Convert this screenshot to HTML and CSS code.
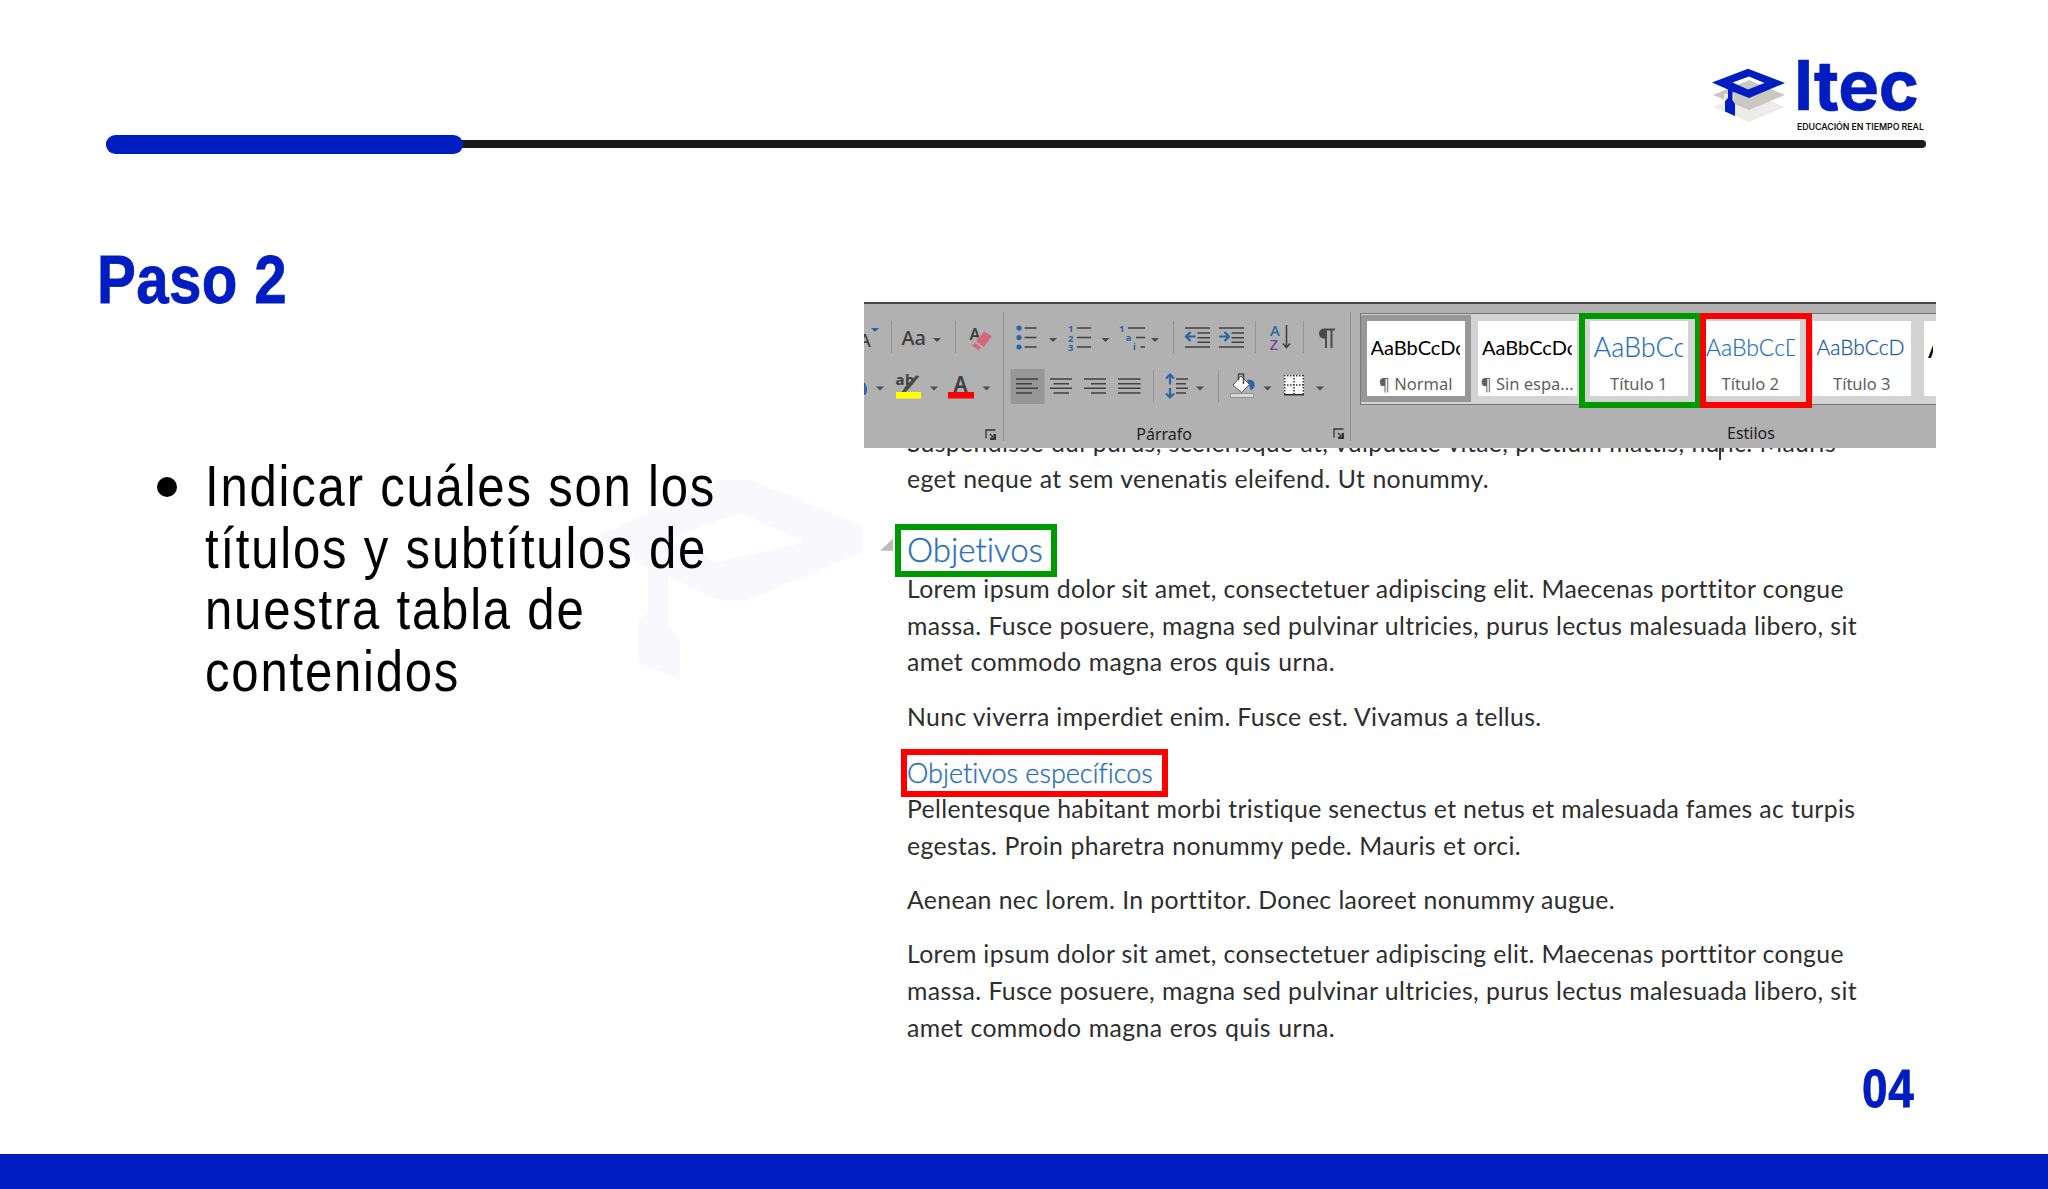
FILE: index.html
```html
<!DOCTYPE html>
<html lang="es">
<head>
<meta charset="utf-8">
<title>Paso 2</title>
<link rel="stylesheet" href="styles.css">
</head>
<body>
<div class="slide">
  <header class="header">
    <div class="logo">
      <svg class="logo-mark" viewBox="0 0 74 56" width="74" height="56">
        <path fill="#ececea" d="M1 39 37 24 73 39 37 54Z"/>
        <path fill="#cbc8c3" d="M1 27 37 12 73 27 37 42Z"/>
        <path fill="#fff" d="M12 26h10v20h-10z" opacity=".6"/>
        <path fill="#001dc1" fill-rule="evenodd" d="M0 14.500 36 .7 73 15 37 30 20.500 23.500V32L23 36V48L13 43.500V33L16 30V21.500ZM20.500 14.500 36 21.500 52.500 15 37 8.500Z"/>
      </svg>
      <div class="logo-words">
        <div class="logo-name">Itec</div>
        <div class="logo-tag">EDUCACIÓN EN TIEMPO REAL</div>
      </div>
    </div>
    <div class="rule"><div class="rule-accent"></div></div>
  </header>

  <main class="main">
    <section class="lesson">
      <h1 class="title">Paso 2</h1>
      <ul class="steps">
        <li class="step"><span class="dot"></span><p class="step-text">Indicar cuáles son los<br>títulos y subtítulos de<br>nuestra tabla de<br>contenidos</p></li>
      </ul>
      <svg class="watermark" viewBox="595 475 268 240" width="268" height="240">
        <path fill="#f9f9fd" fill-rule="evenodd" d="M597 536 722 480H752L863 526V552L748 600H718L668 577V624L680 640V680L638 662V622L648 612V568ZM668 540 718 562 805 542 740 513Z"/>
      </svg>
    </section>

    <section class="word">
      <div class="ribbon">
        <div class="group group-font">
          <svg class="tools" viewBox="864 304 139 108" width="139" height="108">
            <g fill="#3f3f3f" font-family="Noto Sans, sans-serif">
              <text x="859" y="347" font-size="18" font-weight="500">A</text>
              <text x="901.500" y="345" font-size="20" font-weight="500">Aa</text>
              <text x="969.500" y="340" font-size="16" font-weight="600">A</text>
              <text x="895.500" y="384.500" font-size="15" font-weight="700" textLength="19">ab</text>
              <text x="953.500" y="392" font-size="21" font-weight="600">A</text>
            </g>
            <path fill="#2b65a8" d="M871 328h8l-4 4zM864 382q3 3 3 8t-3 5z"/>
            <path stroke="#939393" d="M891.500 321v32M955.500 321v32"/>
            <path fill="#4c4c4c" d="M933 338h8l-4 4zM876 386.500h8l-4 4zM930 386.500h8l-4 4zM982.500 386.500h8l-4 4z"/>
            <path fill="#d9667f" stroke="#b1b1b1" stroke-width=".8" d="M984 331 992.500 336 984 347.500 975.500 341.500ZM975 342.500 981.500 347 979 351 971 345Z"/>
            <path fill="#4a4a4a" d="M919.500 376 907 391 904 388 916 375.500ZM904.500 388.500 907 391.500 901 392.500Z"/>
            <path fill="#ff0" d="M896 392h25v6.500h-25z"/>
            <path fill="#f00" d="M948 392h26v6.500h-26z"/>
          </svg>
          <div class="group-foot">
            <svg class="launcher" viewBox="0 0 12 12" width="12" height="12"><path fill="none" stroke="#333" stroke-width="1.300" d="M1 9.500V1H10.500M5 5 8 8"/><path fill="#333" d="M11 5V11H5V8.500H8.500V5Z"/></svg>
          </div>
        </div>

        <div class="group group-paragraph">
          <svg class="tools" viewBox="1004 304 347 108" width="347" height="108">
            <path fill="#979797" d="M1010.500 369h34v35h-34z"/>
            <g fill="#2b65a8"><circle cx="1019" cy="328" r="2.600"/><circle cx="1019" cy="337.500" r="2.600"/><circle cx="1019" cy="347" r="2.600"/></g>
            <g fill="#2b65a8" font-family="Noto Sans, sans-serif" font-weight="700" font-size="9.500">
              <text x="1068" y="332">1</text><text x="1068" y="341.500">2</text><text x="1068" y="351">3</text>
              <text x="1119" y="331.500">1</text><text x="1125.500" y="341">a</text><text x="1133" y="350">i</text>
            </g>
            <path stroke="#414141" stroke-width="1.600" d="M1024.500 328h12M1024.500 337.500h12M1024.500 347h12M1077 328h14M1077 337.500h14M1077 347h14M1128 328h17M1136 337.500h9M1140.500 347h4.500
              M1185 328h25M1197.500 333h12.500M1197.500 337.700h12.500M1197.500 342.300h12.500M1185 347h25
              M1219 328h25M1231.500 333h12.500M1231.500 337.700h12.500M1231.500 342.300h12.500M1219 347h25
              M1016 379h22M1016 383.700h16M1016 388.300h22M1016 393h16
              M1050 379h22M1053.500 383.700h15.500M1050 388.300h22M1053.500 393h15.500
              M1084 379h22M1091 383.700h15M1084 388.300h22M1091 393h15
              M1118 379h22.500M1118 383.700h22.500M1118 388.300h22.500M1118 393h22.500
              M1176 379h12M1176 383.700h10M1176 388.300h12M1176 393h10"/>
            <path stroke="#939393" d="M1173.500 321v32M1255.500 321v32M1303.500 321v32M1153.500 370v32M1218.500 370v32"/>
            <path fill="#4c4c4c" d="M1049 338h8l-4 4zM1101.500 338h8l-4 4zM1151 338h8l-4 4zM1196 386.500h8l-4 4zM1263.500 386.500h8l-4 4zM1316 386.500h8l-4 4z"/>
            <path fill="none" stroke="#2b65a8" stroke-width="2.200" d="M1195.500 336.500h-8M1190.500 332l-4.500 4.500 4.500 4.500M1219 336.500h8M1224.500 332l4.500 4.500-4.500 4.500M1170 375.500v9M1166 378.500l4-4 4 4M1170 388v9M1166 393.500l4 4 4-4"/>
            <g font-family="Noto Sans, sans-serif" font-weight="500" font-size="15"><text x="1270" y="336" fill="#2b65a8">A</text><text x="1269.500" y="349.500" fill="#7442a6">Z</text></g>
            <path fill="none" stroke="#414141" stroke-width="1.600" d="M1286.500 325v22M1283 343.500l3.500 4 3.500-4"/>
            <path fill="#4a4a4a" d="M1335 328.500v2h-2.500V348h-2V330.500h-3.500V348h-2V338.500c-4 0-6-2-6-5s2-5 6-5z"/>
            <path fill="#2b65a8" d="M1247 380c5-1 7 1 7.500 4 .5 3-1 5-3.500 6.500Z"/>
            <path fill="#fff" stroke="#555" d="M1241 376 1249.500 384.500 1241.500 392.500 1233 385Z"/>
            <path fill="none" stroke="#4a4a4a" stroke-width="1.500" d="M1238.500 380V374h5V384"/>
            <path fill="#d8d8d8" stroke="#929292" d="M1230.500 393.500h23v4h-23z"/>
            <path fill="#fff" d="M1284 375h20v20h-20z"/>
            <path fill="none" stroke="#333" stroke-width="1.500" stroke-dasharray="1.500 1.500" d="M1284 375.700h20M1284 385h20M1284.700 375v19M1294 375v19M1303.300 375v19"/>
            <path stroke="#333" stroke-width="1.600" d="M1284 394.700h20"/>
          </svg>
          <div class="group-foot">
            <span class="group-name">Párrafo</span>
            <svg class="launcher" viewBox="0 0 12 12" width="12" height="12"><path fill="none" stroke="#333" stroke-width="1.300" d="M1 9.500V1H10.500M5 5 8 8"/><path fill="#333" d="M11 5V11H5V8.500H8.500V5Z"/></svg>
          </div>
        </div>

        <div class="group group-styles">
          <div class="gallery">
            <div class="style is-selected"><div class="sample sample-normal">AaBbCcDc</div><div class="style-name">¶ Normal</div></div>
            <div class="style"><div class="sample sample-normal">AaBbCcDc</div><div class="style-name">¶ Sin espa...</div></div>
            <div class="style mark-green"><div class="sample sample-t1">AaBbCc</div><div class="style-name">Título 1</div></div>
            <div class="style mark-red"><div class="sample sample-t2">AaBbCcD</div><div class="style-name">Título 2</div></div>
            <div class="style"><div class="sample sample-t3">AaBbCcD</div><div class="style-name">Título 3</div></div>
            <div class="style style-cut"><div class="sample sample-title">A</div></div>
          </div>
          <div class="group-foot"><span class="group-name">Estilos</span></div>
        </div>
      </div>

      <article class="page">
        <p class="para para-cut"><span class="line w-a">Suspendisse dui purus, scelerisque at, vulputate vitae, pretium mattis, nunc. Mauris</span><span class="line w-b">eget neque at sem venenatis eleifend. Ut nonummy.</span><i class="caret"></i></p>
        <h2 class="heading"><i class="fold"></i><span class="box box-green">Objetivos</span></h2>
        <p class="para"><span class="line w-c">Lorem ipsum dolor sit amet, consectetuer adipiscing elit. Maecenas porttitor congue</span><span class="line w-d">massa. Fusce posuere, magna sed pulvinar ultricies, purus lectus malesuada libero, sit</span><span class="line w-e">amet commodo magna eros quis urna.</span></p>
        <p class="para"><span class="line w-f">Nunc viverra imperdiet enim. Fusce est. Vivamus a tellus.</span></p>
        <h3 class="subheading"><span class="box box-red">Objetivos específicos</span></h3>
        <p class="para"><span class="line w-g">Pellentesque habitant morbi tristique senectus et netus et malesuada fames ac turpis</span><span class="line w-h">egestas. Proin pharetra nonummy pede. Mauris et orci.</span></p>
        <p class="para"><span class="line w-i">Aenean nec lorem. In porttitor. Donec laoreet nonummy augue.</span></p>
        <p class="para"><span class="line w-c">Lorem ipsum dolor sit amet, consectetuer adipiscing elit. Maecenas porttitor congue</span><span class="line w-d">massa. Fusce posuere, magna sed pulvinar ultricies, purus lectus malesuada libero, sit</span><span class="line w-e">amet commodo magna eros quis urna.</span></p>
      </article>
    </section>
  </main>

  <div class="page-number"><span class="page-digits">04</span></div>
  <footer class="footer"></footer>
</div>
</body>
</html>
```
FILE: styles.css
```css
*, *::before, *::after { box-sizing: border-box; }
body { margin: 0; background: #fff; }
h1, h2, h3, p, ul { margin: 0; padding: 0; font-weight: 400; }

.slide { width: 2048px; height: 1189px; display: flex; flex-direction: column; overflow: hidden; background: #fff; }

/* Header */
.header { height: 168px; padding: 56px 122px 0 106px; }
.logo { display: flex; justify-content: flex-end; height: 84px; }
.logo-mark { margin: 12px 11px 0 0; }
.logo-words { width: 129px; color: #001dc1; font-family: Inter, sans-serif; white-space: nowrap; }
.logo-name { height: 65px; font-size: 68.500px; line-height: 60px; font-weight: 700; letter-spacing: -0.2px; text-indent: -3px; -webkit-text-stroke: .6px #001dc1; }
.logo-tag { color: #111; font-size: 8.8px; line-height: 12px; font-weight: 600; letter-spacing: -0.05px; }
.rule { height: 8px; border-radius: 4px; background: #1a1a1a; width: 1820px; display: flex; align-items: center; }
.rule-accent { width: 357px; height: 19px; flex: none; border-radius: 10px; background: #001dc1; }

/* Body columns */
.main { display: flex; height: 892px; }
.lesson { position: relative; width: 864px; padding: 72px 0 0 97px; }
.title { height: 80px; color: #001dc1; font: 700 69px/80px "Liberation Sans", Arial, sans-serif; letter-spacing: .4px; -webkit-text-stroke: .8px #001dc1; transform: scaleX(.845); transform-origin: 0 0; white-space: nowrap; }
.steps { list-style: none; margin-top: 136px; padding-left: 60px; }
.step { position: relative; z-index: 1; display: flex; gap: 28px; }
.dot { width: 20px; height: 20px; margin-top: 21px; border-radius: 50%; background: #000; }
.step-text { color: #000; font: 400 57px/61.5px "Liberation Sans", Arial, sans-serif; letter-spacing: 2.1px; white-space: nowrap; transform: scaleX(.86); transform-origin: 0 0; }
.watermark { position: absolute; left: 595px; top: 307px; }

/* Word window */
.word { width: 1072px; padding-top: 134px; }
.ribbon { position: relative; z-index: 1; display: flex; height: 146px; background: #b1b1b1; border-top: 2px solid #474747; overflow: hidden; }
.group { display: flex; flex-direction: column; flex: none; }
.group-font { width: 140px; }
.group-paragraph { width: 347px; }
.group-styles { width: 585px; }
.group-font, .group-paragraph { background: linear-gradient(#8f8f8f, #8f8f8f) right 8px / 1px 129px no-repeat; }
.tools { flex: none; display: block; }
.group-foot { display: flex; align-items: center; justify-content: flex-end; height: 36px; padding-top: 8px; }
.group-font .group-foot { padding: 10px 7px 0 0; }
.group-paragraph .group-foot { padding-right: 6px; gap: 141px; }
.group-name { color: #222; font: 400 16px/20px "Noto Sans", sans-serif; margin-top: -1px; }

.gallery { display: flex; gap: 13px; flex: none; width: 576px; height: 92px; margin: 9px 0 0 9px; padding: 7px 0 0 5.5px; background: #d3d3d3; border: 1.500px solid #777; border-right: 0; overflow: visible; }
.style { position: relative; flex: none; width: 98.500px; height: 75px; background: #fff; text-align: center; }
.style.is-selected { outline: 6px solid #979797; }
.style.mark-green::after, .style.mark-red::after { content: ""; position: absolute; left: -11px; top: -8px; width: 122px; height: 95px; border: 6px solid #090; }
.style.mark-red { z-index: 1; }
.style.mark-red::after { left: -1px; width: 111.500px; border-color: #f00; }
.style.mark-red .sample { margin-left: 5px; }
.sample { height: 53px; margin: 0 5px 0 4px; overflow: hidden; text-align: left; white-space: nowrap; font-family: Lato, sans-serif; line-height: 52px; color: #000; }
.sample-normal { font-size: 20px; }
.sample-t1 { font-size: 27px; font-weight: 300; color: #1f6fbf; -webkit-text-stroke: .2px #1f6fbf; }
.sample-t2 { font-size: 23px; font-weight: 300; color: #1f6fbf; -webkit-text-stroke: .2px #1f6fbf; }
.sample-t3 { font-size: 21px; font-weight: 300; color: #1c5c9e; -webkit-text-stroke: .3px #1c5c9e; }
.sample-title { font-size: 28px; }
.style-name { height: 20px; color: #606060; font: 400 16.500px/20px "Noto Sans", sans-serif; white-space: nowrap; }
.style-cut { width: 14px; overflow: hidden; }
.group-styles .group-foot { justify-content: flex-start; padding-left: 376px; height: 43px; padding-top: 13px; }

/* Document page */
.page { padding-left: 43px; color: #2e2e2e; font: 400 24.800px/36.600px Lato, sans-serif; }
.para { margin-bottom: 17.800px; }
.para-cut { position: relative; margin-top: -23.500px; margin-bottom: 26px; }
.line { display: block; white-space: nowrap; letter-spacing: .35px; text-align: justify; text-align-last: justify; }
.w-a { width: 929px; }
.w-b { width: 582px; }
.w-c { width: 937px; }
.w-d { width: 950px; }
.w-e { width: 428px; }
.w-f { width: 631px; }
.w-g { width: 946px; }
.w-h { width: 614px; }
.w-i { width: 708px; }
.caret { position: absolute; left: 812px; top: 22px; width: 2px; height: 13px; background: #333; }
.heading { display: flex; align-items: flex-start; height: 47.4px; margin-left: -27px; }
.fold { width: 13px; height: 12px; margin: 15px 2px 0 0; background: #bbb; clip-path: polygon(100% 0, 100% 100%, 0 100%); }
.box { display: block; flex: none; font-family: Lato, sans-serif; font-weight: 300; color: #2a6fb5; -webkit-text-stroke: .35px #2a6fb5; font-variant-ligatures: none; white-space: nowrap; }
.box-green { width: 162px; height: 53px; padding-left: 6px; border: 6px solid #090; font-size: 33px; line-height: 38px; }
.subheading { display: flex; height: 41.800px; margin: -3.800px 0 0 -6px; }
.box-red { width: 267px; height: 48px; border: 6px solid #f00; font-size: 27px; line-height: 35px; }

/* Slide foot */
.page-number { height: 94px; padding-left: 1862px; }
.page-digits { display: block; color: #001dc1; font: 700 54px/56px "Liberation Sans", Arial, sans-serif; letter-spacing: .8px; -webkit-text-stroke: .8px #001dc1; transform: scaleX(.85); transform-origin: 0 0; }
.footer { flex: 1; background: #001dc1; }
```
